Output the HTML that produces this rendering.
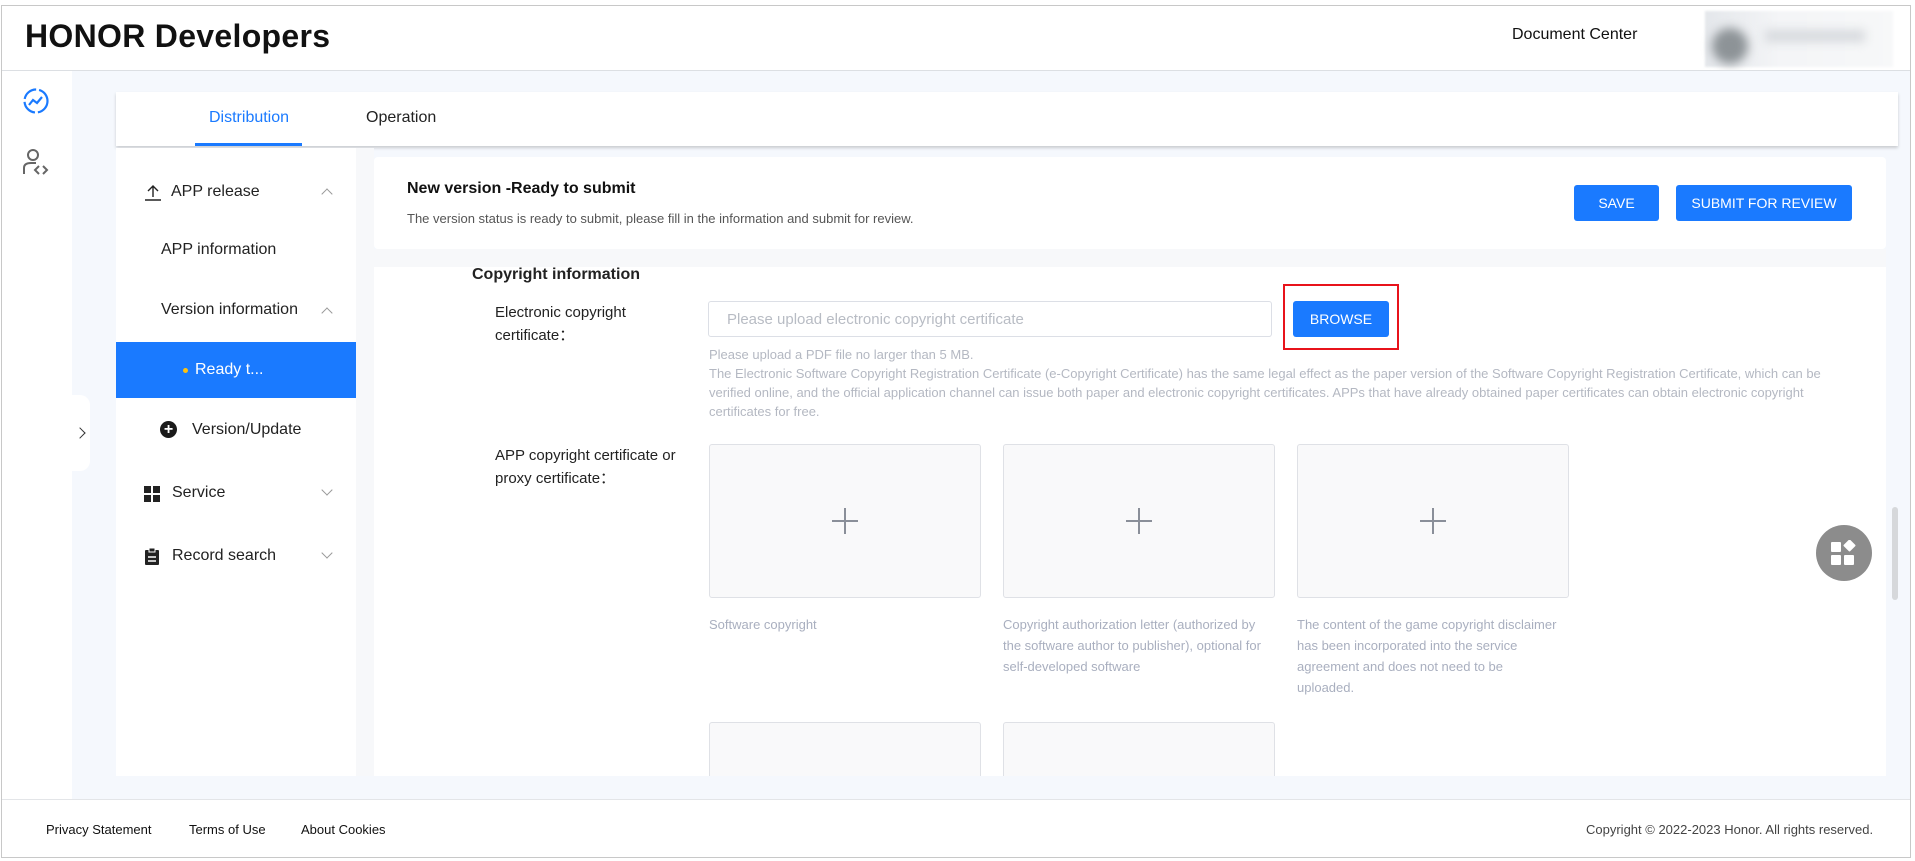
<!DOCTYPE html>
<html><head><meta charset="utf-8"><style>
*{margin:0;padding:0;box-sizing:border-box}
body{width:1915px;height:861px;overflow:hidden;background:#fff;font-family:"Liberation Sans",Arial,sans-serif;position:relative;color:#222}
.a{position:absolute}
.t{position:absolute;white-space:nowrap;line-height:1}
.btn{position:absolute;background:#1a7aff;color:#fff;border-radius:3px;font-size:14px;display:flex;align-items:center;justify-content:center}
.box{position:absolute;background:#f9f9fa;border:1px solid #dfe1e6;border-radius:3px}
.pl:before,.pl:after{content:"";position:absolute;background:#8a8f99;left:50%;top:50%}
.pl:before{width:26px;height:1.5px;margin-left:-13px;margin-top:-1px}
.pl:after{width:1.5px;height:26px;margin-left:-1px;margin-top:-13px}
.cap{position:absolute;font-size:13px;line-height:21px;color:#a9afbf;white-space:nowrap}
.chev{position:absolute;width:8px;height:8px;border-left:1px solid #999;border-top:1px solid #999}
</style></head><body>
<div class="a" style="left:1px;top:5px;width:1910px;height:853px;border:1px solid #c8c8c8"></div>
<!-- header -->
<div class="t" style="left:25px;top:20px;font-size:32px;font-weight:bold;color:#111;letter-spacing:0.3px">HONOR Developers</div>
<div class="t" style="left:1512px;top:27px;font-size:16px;color:#111">Document Center</div>
<div class="a" style="left:1705px;top:11px;width:188px;height:56px;background:linear-gradient(90deg,#e4e7eb,#f4f5f7 40%,#f7f8f9);filter:blur(1px)"></div>
<div class="a" style="left:1712px;top:28px;width:36px;height:36px;border-radius:50%;background:#8d9397;filter:blur(5px)"></div>
<div class="a" style="left:1765px;top:30px;width:100px;height:12px;background:#d6d9dd;filter:blur(5px)"></div>
<div class="a" style="left:2px;top:70px;width:1908px;height:1px;background:#dcdfe3"></div>
<!-- bg -->
<div class="a" style="left:72px;top:71px;width:1838px;height:729px;background:#f5f8fd"></div>
<!-- rail icons -->
<svg class="a" style="left:22px;top:87px" width="28" height="28" viewBox="0 0 28 28"><circle cx="14" cy="14" r="11.5" fill="none" stroke="#1a7aff" stroke-width="2.2" stroke-dasharray="16 3"/><path d="M7 18 L11 13 L15 16 L20 10" fill="none" stroke="#1a7aff" stroke-width="2.2"/></svg>
<svg class="a" style="left:22px;top:148px" width="30" height="30" viewBox="0 0 30 30"><circle cx="11" cy="7" r="5" fill="none" stroke="#666" stroke-width="2"/><path d="M2 26 V20 Q2 15 9 15 H14" fill="none" stroke="#666" stroke-width="2"/><path d="M17 18 L13 22 L17 26 M21 18 L25 22 L21 26" fill="none" stroke="#666" stroke-width="2"/></svg>
<div class="a" style="left:72px;top:395px;width:18px;height:76px;background:#fff;border-radius:0 10px 10px 0"></div>
<div class="a" style="left:76px;top:429px;width:8px;height:8px;border-right:1.5px solid #333;border-top:1.5px solid #333;transform:rotate(45deg)"></div>
<!-- tabs -->
<div class="a" style="left:116px;top:92px;width:1782px;height:54px;background:#fff;box-shadow:0 2px 3px rgba(0,0,0,0.18)"></div>
<div class="t" style="left:209px;top:110px;font-size:16px;color:#1a7aff">Distribution</div>
<div class="t" style="left:366px;top:110px;font-size:16px;color:#222">Operation</div>
<div class="a" style="left:195px;top:143px;width:107px;height:3px;background:#1a7aff"></div>
<!-- sidebar -->
<div class="a" style="left:116px;top:148px;width:240px;height:628px;background:#fff"></div>
<div class="a" style="left:356px;top:148px;width:18px;height:628px;background:#f7f8fa"></div>
<svg class="a" style="left:144px;top:183px" width="18" height="18" viewBox="0 0 18 18"><path d="M9 14 V3 M4 8 L9 3 L14 8 M1 17 H17" fill="none" stroke="#222" stroke-width="1.4"/></svg>
<div class="t" style="left:171px;top:184px;font-size:16px">APP release</div>
<div class="chev" style="left:323px;top:190px;transform:rotate(45deg)"></div>
<div class="t" style="left:161px;top:242px;font-size:16px">APP information</div>
<div class="t" style="left:161px;top:302px;font-size:16px">Version information</div>
<div class="chev" style="left:323px;top:309px;transform:rotate(45deg)"></div>
<div class="a" style="left:116px;top:342px;width:240px;height:56px;background:#1a7aff"></div>
<div class="a" style="left:183px;top:368px;width:5px;height:5px;border-radius:50%;background:#ffc20e"></div>
<div class="t" style="left:195px;top:362px;font-size:16px;color:#fff">Ready t...</div>
<div class="a" style="left:160px;top:421px;width:17px;height:17px;border-radius:50%;background:#1a1a1a;color:#fff;font-size:16px;font-weight:bold;text-align:center;line-height:17px">+</div>
<div class="t" style="left:192px;top:422px;font-size:16px">Version/Update</div>
<svg class="a" style="left:144px;top:486px" width="16" height="16" viewBox="0 0 16 16"><rect x="0" y="0" width="7" height="7" fill="#222"/><rect x="9" y="0" width="7" height="7" fill="#222"/><rect x="0" y="9" width="7" height="7" fill="#222"/><rect x="9" y="9" width="7" height="7" fill="#222"/></svg>
<div class="t" style="left:172px;top:485px;font-size:16px">Service</div>
<div class="chev" style="left:323px;top:486px;transform:rotate(225deg)"></div>
<svg class="a" style="left:144px;top:548px" width="16" height="17" viewBox="0 0 16 17"><rect x="1" y="2" width="14" height="15" rx="1" fill="#222"/><rect x="5" y="0" width="6" height="4" fill="#222" stroke="#fff" stroke-width="1"/><path d="M4 9 H12 M4 13 H12" stroke="#fff" stroke-width="1.5"/></svg>
<div class="t" style="left:172px;top:548px;font-size:16px">Record search</div>
<div class="chev" style="left:323px;top:549px;transform:rotate(225deg)"></div>
<!-- header card -->
<div class="a" style="left:374px;top:157px;width:1512px;height:92px;background:#fff;border-radius:4px"></div>
<div class="a" style="left:374px;top:249px;width:1512px;height:18px;background:#f7f8fa"></div>
<div class="t" style="left:407px;top:181px;font-size:16px;font-weight:bold;color:#111">New version -Ready to submit</div>
<div class="t" style="left:407px;top:212px;font-size:13px;color:#555">The version status is ready to submit, please fill in the information and submit for review.</div>
<div class="btn" style="left:1574px;top:185px;width:85px;height:36px">SAVE</div>
<div class="btn" style="left:1676px;top:185px;width:176px;height:36px">SUBMIT FOR REVIEW</div>
<!-- form card -->
<div class="a" style="left:374px;top:267px;width:1512px;height:509px;background:#fff;overflow:hidden">
<div class="box" style="left:335px;top:455px;width:272px;height:100px"></div>
<div class="box" style="left:629px;top:455px;width:272px;height:100px"></div>
</div>
<div class="t" style="left:472px;top:267px;font-size:16px;font-weight:bold;color:#222">Copyright information</div>
<div class="a" style="left:495px;top:301px;font-size:15px;line-height:23px;color:#222">Electronic copyright<br>certificate：</div>
<div class="a" style="left:708px;top:301px;width:564px;height:36px;border:1px solid #dcdfe6;border-radius:3px;font-size:15px;color:#b8bcc4;padding:9px 18px;line-height:17px">Please upload electronic copyright certificate</div>
<div class="a" style="left:1283px;top:284px;width:116px;height:66px;border:2px solid #e8131b"></div>
<div class="btn" style="left:1293px;top:301px;width:96px;height:36px">BROWSE</div>
<div class="a" style="left:709px;top:345px;width:1135px;font-size:13px;line-height:19px;color:#b4b8c2">Please upload a PDF file no larger than 5 MB.<br>The Electronic Software Copyright Registration Certificate (e-Copyright Certificate) has the same legal effect as the paper version of the Software Copyright Registration Certificate, which can be verified online, and the official application channel can issue both paper and electronic copyright certificates. APPs that have already obtained paper certificates can obtain electronic copyright certificates for free.</div>
<div class="a" style="left:495px;top:444px;font-size:15px;line-height:23px;color:#222">APP copyright certificate or<br>proxy certificate：</div>
<div class="box pl" style="left:709px;top:444px;width:272px;height:154px"></div>
<div class="box pl" style="left:1003px;top:444px;width:272px;height:154px"></div>
<div class="box pl" style="left:1297px;top:444px;width:272px;height:154px"></div>
<div class="cap" style="left:709px;top:614px">Software copyright</div>
<div class="cap" style="left:1003px;top:614px">Copyright authorization letter (authorized by<br>the software author to publisher), optional for<br>self-developed software</div>
<div class="cap" style="left:1297px;top:614px">The content of the game copyright disclaimer<br>has been incorporated into the service<br>agreement and does not need to be<br>uploaded.</div>
<div class="a" style="left:374px;top:776px;width:1536px;height:23px;background:#f5f8fd"></div>
<div class="a" style="left:1892px;top:507px;width:6px;height:93px;border-radius:3px;background:#d6d8db"></div>
<div class="a" style="left:1816px;top:525px;width:56px;height:56px;border-radius:50%;background:#8c8c8c"></div>
<svg class="a" style="left:1830px;top:540px" width="28" height="26" viewBox="0 0 28 26"><rect x="1" y="2" width="10" height="10" rx="1" fill="#fff"/><rect x="1" y="15" width="10" height="10" rx="1" fill="#fff"/><rect x="14" y="15" width="10" height="10" rx="1" fill="#fff"/><rect x="15" y="1" width="9" height="9" rx="1" fill="#fff" transform="rotate(45 19.5 5.5)"/></svg>
<!-- footer -->
<div class="a" style="left:2px;top:799px;width:1908px;height:1px;background:#e3e5e8"></div>
<div class="t" style="left:46px;top:823px;font-size:13px;color:#111">Privacy Statement</div>
<div class="t" style="left:189px;top:823px;font-size:13px;color:#111">Terms of Use</div>
<div class="t" style="left:301px;top:823px;font-size:13px;color:#111">About Cookies</div>
<div class="t" style="left:1586px;top:823px;font-size:13px;color:#444">Copyright © 2022-2023 Honor. All rights reserved.</div>
</body></html>
